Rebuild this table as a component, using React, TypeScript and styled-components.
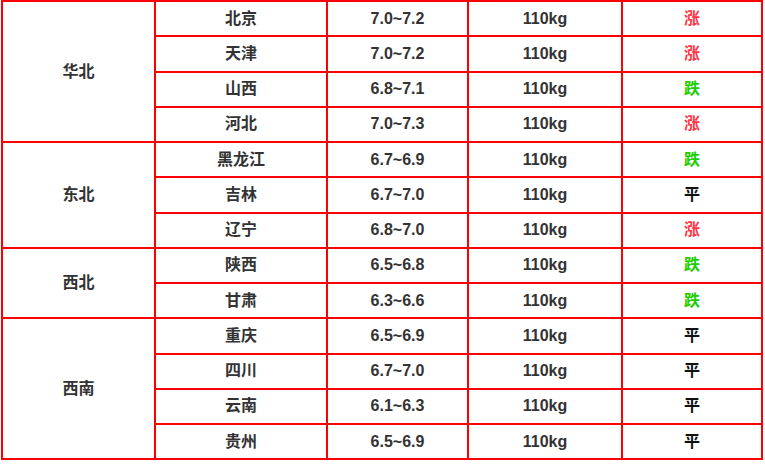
import React from 'react';
import styled, { createGlobalStyle } from 'styled-components';

const GlobalStyle = createGlobalStyle`
  html, body {
    margin: 0;
    padding: 0;
    background: #fff;
  }
  body {
    font-family: "Liberation Sans", "Noto Sans CJK SC", Arial, sans-serif;
  }
`;

const Table = styled.table`
  width: 760px;
  table-layout: fixed;
  border-collapse: collapse;
  border: 2px solid #ff0000;
  margin: 0 0 0 1px;
`;

const Col = styled.col<{ $w: number }>`
  width: ${({ $w }) => $w}px;
`;

const Row = styled.tr`
  height: 35.25px;
`;

const Cell = styled.td<{ $tone?: 'up' | 'down' | 'flat' }>`
  border: 2px solid #ff0000;
  padding: 0;
  text-align: center;
  vertical-align: middle;
  font-size: 16px;
  font-weight: bold;
  line-height: 20px;
  color: ${({ $tone }) =>
    $tone === 'up' ? '#ff3344' : $tone === 'down' ? '#22cc00' : $tone === 'flat' ? '#111' : '#333'};
`;

type Trend = '涨' | '跌' | '平';

interface Item {
  city: string;
  price: string;
  trend: Trend;
}

interface Region {
  name: string;
  items: Item[];
}

const widths = [153, 172, 141, 154, 140];

const regions: Region[] = [
  {
    name: '华北',
    items: [
      { city: '北京', price: '7.0~7.2', trend: '涨' },
      { city: '天津', price: '7.0~7.2', trend: '涨' },
      { city: '山西', price: '6.8~7.1', trend: '跌' },
      { city: '河北', price: '7.0~7.3', trend: '涨' },
    ],
  },
  {
    name: '东北',
    items: [
      { city: '黑龙江', price: '6.7~6.9', trend: '跌' },
      { city: '吉林', price: '6.7~7.0', trend: '平' },
      { city: '辽宁', price: '6.8~7.0', trend: '涨' },
    ],
  },
  {
    name: '西北',
    items: [
      { city: '陕西', price: '6.5~6.8', trend: '跌' },
      { city: '甘肃', price: '6.3~6.6', trend: '跌' },
    ],
  },
  {
    name: '西南',
    items: [
      { city: '重庆', price: '6.5~6.9', trend: '平' },
      { city: '四川', price: '6.7~7.0', trend: '平' },
      { city: '云南', price: '6.1~6.3', trend: '平' },
      { city: '贵州', price: '6.5~6.9', trend: '平' },
    ],
  },
];

const toneOf = (t: Trend) => (t === '涨' ? 'up' : t === '跌' ? 'down' : 'flat');

export default function App() {
  return (
    <>
      <GlobalStyle />
      <Table>
        <colgroup>
          {widths.map((w, i) => (
            <Col key={i} $w={w} />
          ))}
        </colgroup>
        <tbody>
          {regions.map(region =>
            region.items.map((item, i) => (
              <Row key={region.name + item.city}>
                {i === 0 && <Cell rowSpan={region.items.length}>{region.name}</Cell>}
                <Cell>{item.city}</Cell>
                <Cell>{item.price}</Cell>
                <Cell>110kg</Cell>
                <Cell $tone={toneOf(item.trend)}>{item.trend}</Cell>
              </Row>
            ))
          )}
        </tbody>
      </Table>
    </>
  );
}
